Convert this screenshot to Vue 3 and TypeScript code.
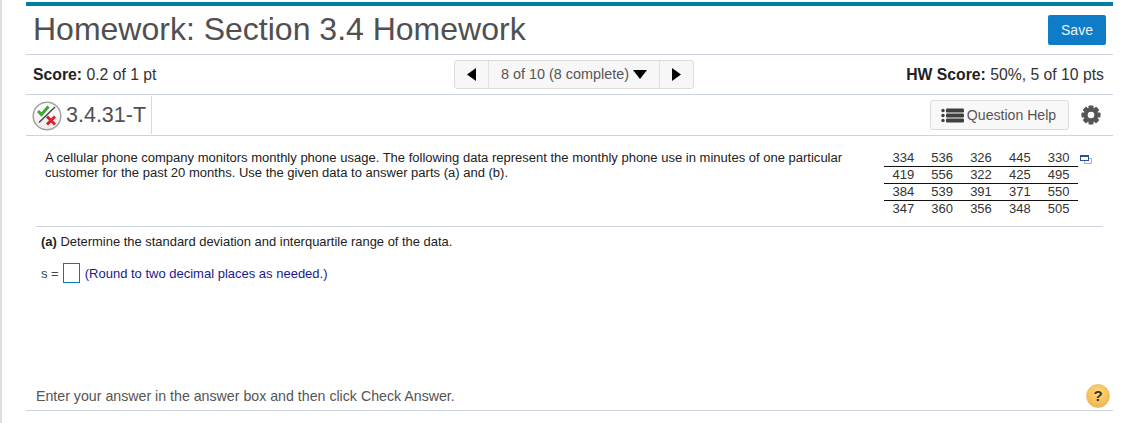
<script setup lang="ts">
const rows: number[][] = [
  [334, 536, 326, 445, 330],
  [419, 556, 322, 425, 495],
  [384, 539, 391, 371, 550],
  [347, 360, 356, 348, 505],
]
</script>

<template>
  <div class="page">
    <div class="shell">
      <div class="topbar"></div>
      <header class="title-row">
        <h1>Homework: Section 3.4 Homework</h1>
        <button class="save">Save</button>
      </header>
      <div class="score-row">
        <div class="score"><b>Score:</b> 0.2 of 1 pt</div>
        <div class="pager">
          <span class="pg-btn left"><svg width="9" height="13" viewBox="0 0 9 13"><path d="M9 0V13L0 6.500Z" fill="#000"/></svg></span>
          <span class="pg-mid">8 of 10 (8 complete)<svg width="14" height="9" viewBox="0 0 14 9"><path d="M0 0H14L7 9Z" fill="#000"/></svg></span>
          <span class="pg-btn right"><svg width="9" height="13" viewBox="0 0 9 13"><path d="M0 0V13L9 6.500Z" fill="#000"/></svg></span>
        </div>
        <div class="hw"><b>HW Score:</b> 50%, 5 of 10 pts</div>
      </div>
      <div class="question-row">
        <div class="qid">
          <svg class="status" width="30" height="30" viewBox="0 0 30 30">
            <defs>
              <linearGradient id="ring" x1="0" y1="0" x2="0" y2="1">
                <stop offset="0" stop-color="#fff"/>
                <stop offset="1" stop-color="#ececec"/>
              </linearGradient>
            </defs>
            <circle cx="15" cy="15" r="13.800" fill="url(#ring)" stroke="#a2a2a2" stroke-width="1.500"/>
            <path d="M7 21.500 23 6" stroke="#444" stroke-width="1.400"/>
            <path d="M6 10 9.500 13.500 16.500 5.500" fill="none" stroke="#3fa63a" stroke-width="3"/>
            <path d="M15 15.500 23 23.500M23 15.500 15 23.500" stroke="#d8232f" stroke-width="3"/>
          </svg>
          <span>3.4.31-T</span>
        </div>
        <div class="tools">
          <button class="help">
            <svg width="23" height="15" viewBox="0 0 23 15" fill="#3f3f3f">
              <circle cx="2" cy="2.500" r="1.700"/><circle cx="2" cy="7.500" r="1.700"/><circle cx="2" cy="12.500" r="1.700"/>
              <rect x="5" y="0.500" width="18" height="4" rx="1"/><rect x="5" y="5.500" width="18" height="4" rx="1"/><rect x="5" y="10.500" width="18" height="4" rx="1"/>
            </svg>
            Question Help
          </button>
          <svg class="gear" width="20" height="20" viewBox="0 0 20 20">
            <g fill="#555">
              <circle cx="10" cy="10" r="7.200"/>
              <rect x="7.500" y="0.500" width="5" height="19" rx="0.800"/>
              <rect x="7.500" y="0.500" width="5" height="19" rx="0.800" transform="rotate(45 10 10)"/>
              <rect x="7.500" y="0.500" width="5" height="19" rx="0.800" transform="rotate(90 10 10)"/>
              <rect x="7.500" y="0.500" width="5" height="19" rx="0.800" transform="rotate(135 10 10)"/>
            </g>
            <circle cx="10" cy="10" r="3.300" fill="#fff"/>
          </svg>
        </div>
      </div>
      <main class="content">
        <section class="problem">
          <p class="statement">A cellular phone company monitors monthly phone usage. The following data represent the monthly phone use in minutes of one particular customer for the past 20 months. Use the given data to answer parts (a) and (b).</p>
          <div class="data-wrap">
            <table class="data">
              <tbody>
                <tr v-for="(row, i) in rows" :key="i">
                  <td v-for="n in row" :key="n">{{ n }}</td>
                </tr>
              </tbody>
            </table>
            <svg class="popout" width="12" height="9" viewBox="0 0 12 9">
              <rect x="4.500" y="3.500" width="7" height="5" fill="none" stroke="#9db4c9"/>
              <rect x="0.500" y="0.500" width="8" height="5" fill="#fff" stroke="#2a4fa0"/>
              <rect x="0" y="0" width="9" height="2" fill="#2a4fa0"/>
            </svg>
          </div>
        </section>
        <section class="part">
          <p class="prompt"><b>(a)</b> Determine the standard deviation and interquartile range of the data.</p>
          <p class="answer">
            <span class="s">s =</span><span class="box"></span><span class="hint">(Round to two decimal places as needed.)</span>
          </p>
        </section>
      </main>
      <footer class="foot">
        <span>Enter your answer in the answer box and then click Check Answer.</span>
        <span class="q-mark">?</span>
      </footer>
    </div>
  </div>
</template>

<style>
html, body { margin: 0; background: #fff; }
</style>

<style scoped>
.page {
  height: 423px;
  width: 1128px;
  box-sizing: border-box;
  border-left: 2px solid #dedede;
  padding: 2px 0 0 24px;
  font-family: "Liberation Sans", Arial, sans-serif;
  overflow: hidden;
}
.shell { width: 1087px; }
.topbar { height: 4px; background: #007fa3; }
.title-row {
  height: 48px;
  border-bottom: 1px solid #ccd3e0;
  display: flex;
  justify-content: space-between;
  align-items: center;
}
h1 {
  margin: 0 0 3px 7px;
  font-size: 32px;
  font-weight: 400;
  color: #505050;
  line-height: 40px;
}
.save {
  width: 58px;
  height: 30px;
  margin: 0 7px 0 0;
  border: 0;
  border-radius: 2px;
  background: #0f7cc8;
  color: #e8f3fb;
  font: 14px "Liberation Sans", Arial, sans-serif;
  padding: 0;
}
.score-row {
  height: 39px;
  border-bottom: 1px solid #ccd3e0;
  display: grid;
  grid-template-columns: 1fr auto 1fr;
  align-items: center;
  font-size: 15.750px;
  color: #333;
}
.score { padding-left: 7px; }
.score b, .hw b { color: #222; }
.hw { text-align: right; padding-right: 9px; }
.pager {
  display: flex;
  height: 29px;
  margin-left: 9px;
  margin-bottom: 1px;
  box-sizing: border-box;
  border: 1px solid #dcdcdc;
  border-radius: 3px;
  background: #f7f7f7;
  color: #555;
  font-size: 14.400px;
}
.pg-btn { width: 33px; display: flex; align-items: center; justify-content: center; }
.left { border-right: 1px solid #e2e2e2; }
.right { border-left: 1px solid #e2e2e2; }
.pg-mid { width: 170px; display: flex; align-items: center; justify-content: center; gap: 4px; white-space: nowrap; }
.question-row {
  height: 40px;
  border-bottom: 1px solid #ccd3e0;
  display: flex;
  justify-content: space-between;
  align-items: center;
}
.qid {
  display: flex;
  align-items: center;
  height: 38px;
  width: 126px;
  border-right: 1px solid #d4dae5;
  font-size: 21.500px;
  color: #505050;
  padding-left: 6px;
  box-sizing: border-box;
  gap: 4px;
}
.status { margin-top: 1px; }
.tools { display: flex; align-items: center; padding-right: 12px; }
.help {
  width: 139px;
  height: 30px;
  box-sizing: border-box;
  border: 1px solid #dcdcdc;
  border-radius: 3px;
  background: #f8f8f8;
  color: #555;
  font: 14.100px "Liberation Sans", Arial, sans-serif;
  display: flex;
  align-items: center;
  justify-content: center;
  gap: 3px;
  padding: 0 2px 0 0;
}
.gear { margin-left: 12px; }
.content { height: 246px; padding: 0 10px; box-sizing: border-box; }
.problem {
  height: 91px;
  box-sizing: border-box;
  border-bottom: 1px solid #ccd3e0;
  display: flex;
  justify-content: space-between;
  padding: 13px 0 0 9px;
  color: #222;
}
.statement {
  margin: 1px 0 0;
  width: 812px;
  font-size: 13.030px;
  line-height: 15px;
}
.data-wrap { display: flex; align-items: flex-start; padding-right: 11px; }
.data {
  border-collapse: collapse;
  width: 194px;
  font-size: 13px;
  line-height: 13px;
  color: #333;
}
.data td {
  padding: 0;
  height: 17px;
  text-align: center;
  border-bottom: 1px solid #111;
  box-sizing: border-box;
}
.data tr:last-child td { border-bottom: 0; }
.popout { margin: 6px 0 0 2px; }
.part { font-size: 13px; color: #222; }
.prompt { margin: 0; padding: 7px 0 0 5px; line-height: 16px; font-size: 12.950px; }
.answer {
  margin: 13px 0 0 5px;
  display: flex;
  align-items: center;
  height: 20px;
}
.s { color: #444; margin-right: 4px; }
.box {
  width: 15px;
  height: 18px;
  border: 1px solid #007fa3;
  margin-right: 5px;
}
.hint { color: #1a1a8c; font-size: 13px; }
.foot {
  height: 28px;
  border-bottom: 1px solid #ccd3e0;
  display: flex;
  justify-content: space-between;
  align-items: center;
  padding: 0 3px 0 10px;
  font-size: 14.200px;
  color: #555;
}
.q-mark {
  width: 24px;
  height: 24px;
  border-radius: 50%;
  background: radial-gradient(circle at 50% 35%, #ffd980, #f0ac3c);
  border: 1px solid #e8c078;
  box-sizing: border-box;
  color: #333;
  font-weight: 700;
  font-size: 15px;
  text-align: center;
  line-height: 22px;
}
</style>
